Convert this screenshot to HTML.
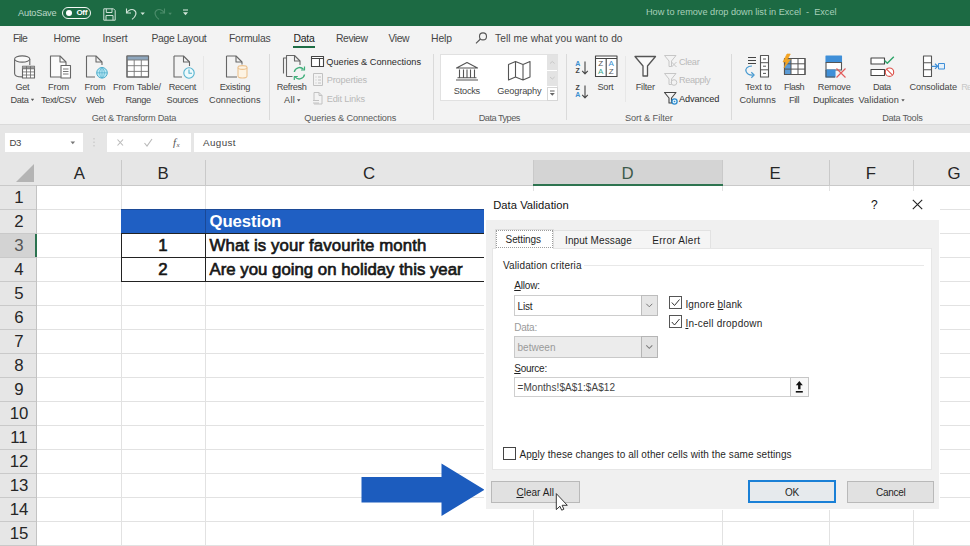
<!DOCTYPE html>
<html lang="en">
<head>
<meta charset="utf-8">
<title>How to remove drop down list in Excel - Excel</title>
<style>
*{box-sizing:border-box;margin:0;padding:0}
html,body{width:970px;height:546px;overflow:hidden;background:#fff}
body{font-family:"Liberation Sans",sans-serif;position:relative;color:#333}
.abs{position:absolute}
.t{position:absolute;white-space:nowrap;line-height:1}
#titlebar{left:0;top:0;width:970px;height:26px;background:#1c6a43}
#ribbon{left:0;top:26px;width:970px;height:98px;background:#f3f3f3}
#fbar{left:0;top:124px;width:970px;height:36px;background:#e6e6e6}
.gsep{position:absolute;top:28px;width:1px;height:66px;background:#dadada}
#grid{left:0;top:160px;width:970px;height:386px;background:#fff;overflow:hidden}
.ch{position:absolute;top:0;height:25px;background:#e6e6e6}
.rh{position:absolute;left:0;width:37px;height:24px;background:#e6e6e6;border-bottom:1px solid #c9c9c9}
.hl{position:absolute;left:37px;width:933px;height:1px;background:#e2e2e2}
.vl{position:absolute;top:25px;width:1px;height:361px;background:#e2e2e2}
#dlg{left:486px;top:187px;width:454px;height:323px}
#dlgtitle{left:-2px;top:4px;width:456px;height:318.500px;background:#fff}
#dlgbody{left:-.5px;top:33px;width:453.800px;height:288.500px;background:#f0f0f0}
.btn{position:absolute;height:22px;background:#e1e1e1;border:1px solid #b9b9b9}
.cb{position:absolute;width:13px;height:13px;border:1px solid #555;background:#fff}
.ico{position:absolute;overflow:visible}
</style>
</head>
<body>
<div id="titlebar" class="abs">
<div class="abs" style="left:62px;top:6.500px;width:29px;height:12.500px;border:1.100px solid #f4f9f6;border-radius:7px"></div>
<div class="abs" style="left:65.500px;top:9.700px;width:6px;height:6px;border-radius:50%;background:#fff"></div>
<svg class="ico" style="left:102.500px;top:7.500px" width="13" height="13" viewBox="0 0 13 13" fill="none" stroke="#cfe2d7" stroke-width="1"><path d="M.8.800h9.700l1.700 1.700v9.700H.8z"/><path d="M3.300.800v3.700h5.700V.8M3 12.200V7.500h7v4.700"/></svg>
<svg class="ico" style="left:124px;top:6px" width="24" height="15" viewBox="0 0 24 15" fill="none" stroke="#d4e6db" stroke-width="1.100"><path d="M2.500 2.500v4.500h4.500"/><path d="M2.800 6.800C4.500 3.800 8 2.700 10.300 4.200c2.800 1.800 2 6-2.300 9.200"/><path d="M16.500 6.500l2.200 2.500 2.200-2.500z" fill="#d4e6db" stroke="none"/></svg>
<svg class="ico" style="left:152px;top:6px" width="24" height="15" viewBox="0 0 24 15" fill="none" stroke="#4d8d6c" stroke-width="1.100"><path d="M12.500 2.500v4.500h-4.500"/><path d="M12.200 6.800C10.500 3.800 7 2.700 4.700 4.200c-2.800 1.800-2 6 2.300 9.200"/><path d="M16.300 6.800l1.800 2.100 1.800-2.100z" fill="#4d8d6c" stroke="none"/></svg>
<svg class="ico" style="left:181px;top:7px" width="9" height="11" viewBox="0 0 9 11"><path d="M2 3h5" stroke="#d4e6db" stroke-width="1.100"/><path d="M2 5.200l2.500 3 2.500-3z" fill="#d4e6db"/></svg>
</div>

<div id="ribbon" class="abs">
<div class="abs" style="left:293px;top:19.500px;width:22px;height:2px;background:#1e6d45"></div>
<div class="gsep" style="left:203px;top:30px;height:34px;background:#e7e7e7"></div>
<div class="gsep" style="left:269px"></div>
<div class="gsep" style="left:432.500px"></div>
<div class="gsep" style="left:566px"></div>
<div class="gsep" style="left:625px;top:30px;height:46px;background:#e7e7e7"></div>
<div class="gsep" style="left:731px"></div>
<div class="abs" style="left:440px;top:28px;width:118px;height:47px;background:#fff;border:1px solid #e1e1e1"></div>
<div class="abs" style="left:547px;top:29px;width:10.500px;height:15px;background:#e3e3e3"></div>
<div class="abs" style="left:547px;top:45px;width:10.500px;height:15px;background:#e3e3e3"></div>
<div class="abs" style="left:546.500px;top:60.500px;width:11.500px;height:14.500px;border:1px solid #d6d6d6;background:#fff"></div>
<svg class="ico" style="left:0;top:0" width="970" height="98" viewBox="0 26 970 98" fill="none" stroke="#666" stroke-width="1.100" stroke-linejoin="round">
<!-- search -->
<circle cx="483" cy="36.400" r="3.500" stroke="#555"/><path d="M480.400 39l-4.400 4.300" stroke="#555"/>
<!-- Get Data -->
<path d="M14.600 59v14.500c0 2 3.200 3.400 7.500 3.400M29.800 59v6"/><ellipse cx="22.200" cy="59" rx="7.600" ry="3.100" fill="#f9f9f9"/>
<rect x="22.500" y="66.200" width="12" height="11.800" fill="#fff"/><rect x="22.500" y="66.200" width="12" height="2.600" fill="#9a9a9a" stroke="none"/><path d="M22.500 68.800h12M22.500 71.900h12M22.500 75h12M26.500 66.200v11.800M30.500 66.200v11.800" stroke-width=".8"/>
<!-- From Text/CSV -->
<path d="M50.500 56h9.500l6 6v15h-15.500z" fill="#fbfbfb"/><path d="M60 56v6h6"/>
<rect x="61" y="65.500" width="9.500" height="12.500" fill="#fff"/><path d="M63 69h5.500M63 71.500h5.500M63 74h5.500" stroke-width=".9"/>
<!-- From Web -->
<path d="M86.500 56h9.500l6 6v3M95 77h-8.500v-21" fill="none"/><path d="M96 56v6h6"/>
<circle cx="102" cy="72.800" r="5.300" fill="#b9e8f4" stroke="#4aaccb" stroke-width="1"/><path d="M96.700 72.800h10.600M102 67.500v10.600M102 67.500c-3.200 3-3.200 7.600 0 10.600M102 67.500c3.200 3 3.200 7.600 0 10.600" stroke="#4aaccb" stroke-width=".7"/>
<!-- From Table/Range -->
<rect x="127" y="56" width="21.500" height="21" fill="#fff"/><rect x="127" y="56" width="21.500" height="4" fill="#8ea6bd" stroke="none"/><path d="M127 60h21.500M127 65.700h21.500M127 71.400h21.500M134.200 60v17M141.300 60v17" stroke-width=".9" stroke="#777"/><rect x="127" y="56" width="21.500" height="21"/>
<!-- Recent Sources -->
<path d="M174 56h9.500l6 6v4M182 77h-8V56"/><path d="M183.500 56v6h6"/>
<circle cx="189" cy="73" r="5.200" fill="#eefafc" stroke="#55b3cf"/><path d="M189 69.500v3.700h3" stroke="#55b3cf"/>
<!-- Existing Connections -->
<path d="M226.500 56h9.500l6 6v2.500M237 77h-10.500V56"/><path d="M236 56v6h6"/>
<path d="M238 67.500v8.500c0 1.200 2 2 4.500 2s4.500-.8 4.500-2v-8.500" fill="#fdf3e3" stroke="#ecc28f"/><ellipse cx="242.500" cy="67.500" rx="4.500" ry="1.900" fill="#fdf3e3" stroke="#ecc28f"/>
<!-- Refresh All -->
<path d="M283.500 73.500v-15.500h3M286.500 76.500h6M286.500 76.500v-21h8l5.500 5.500v4"/><path d="M294.500 55.500v5.500h5.500"/>
<path d="M294.300 72a5.300 5.300 0 0 1 9.200-2.600M304.500 74.500a5.300 5.300 0 0 1-9.200 2.600" stroke="#3fae7a" stroke-width="1.400"/><path d="M304.500 66.500v3.500h-3.500M294.300 80v-3.500h3.500" stroke="#3fae7a" stroke-width="1.200"/>
<!-- Queries & Connections -->
<rect x="311.500" y="56.500" width="12" height="10" fill="#fff" stroke="#444"/><path d="M311.500 58.500h12M319.500 58.500v8" stroke="#444"/>
<!-- Properties (disabled) -->
<g stroke="#c2c2c2" stroke-width="1"><rect x="313.500" y="73.500" width="9" height="12"/><path d="M315.500 77h1M318 77h3M315.500 80h1M318 80h3M315.500 83h1M318 83h3"/></g>
<!-- Edit Links (disabled) -->
<g stroke="#c2c2c2" stroke-width="1"><path d="M314 100v-7.500h5l3 3v8.500h-8"/><path d="M319 92.500v3h3M313 100.500h6M313 103h6"/></g>
<!-- Stocks -->
<g stroke="#555"><path d="M456.500 68l10.500-5.500 10.500 5.500zM456 80h22M457.500 77.800h19M459.500 69.500v8M463.500 69.500v8M467 69.500v8M470.500 69.500v8M474.500 69.500v8" stroke-width="1.100"/></g>
<!-- Geography -->
<path d="M508.500 64.500l7-3 7.500 3 7-3v15.500l-7 3-7.500-3-7 3zM515.500 61.500v15.500M523 64.500v15.500" stroke="#555"/>
<!-- gallery scroll arrows -->
<path d="M550 63.500l2.300-2 2.300 2M550 77l2.300 2 2.300-2" stroke="#c8c8c8" stroke-width="1"/><path d="M550 91h4.600" stroke="#666" stroke-width="1"/><path d="M549.800 93l2.500 2.800 2.500-2.800z" fill="#666" stroke="none"/>
<!-- sort arrows -->
<path d="M585 61.500v12M582.200 70.800l2.800 3 2.800-3M585 85.500v12M582.200 94.800l2.800 3 2.800-3" stroke="#444" stroke-width="1.100"/>
<!-- Sort big -->
<rect x="595.500" y="56" width="21.500" height="20.500" fill="#fff" stroke="#444"/><path d="M595.500 58.500h21.500M606.200 58.500v18" stroke="#444"/>
<!-- Filter -->
<path d="M635 56.500h20.500l-8 9.500v10h-4.500v-10z" fill="#fafafa" stroke="#555" stroke-width="1.300"/>
<!-- Clear (disabled) -->
<g stroke="#c6c6c6" stroke-width="1"><path d="M664.500 55.500h11.500l-4.500 5.500v5.500h-2.500v-5.500z"/><path d="M671.500 62l5 5M676.500 62l-5 5"/></g>
<!-- Reapply (disabled) -->
<g stroke="#c6c6c6" stroke-width="1"><path d="M664.500 73.500h11.500l-4.500 5.500v5.500h-2.500v-5.500z"/><circle cx="674" cy="82.500" r="2.800"/></g>
<!-- Advanced -->
<path d="M664.500 92.500h11.500l-4.500 5.500v5h-2.500v-5z" stroke="#444" stroke-width="1.100"/><circle cx="674.500" cy="101.500" r="2.600" fill="#e4f3fb" stroke="#2e8ccf" stroke-width="1.300"/><circle cx="674.500" cy="101.500" r=".8" fill="#2e8ccf" stroke="none"/>
<!-- Text to Columns -->
<path d="M748 57.500h8M748 60.500h8M748 63.500h8" stroke="#444" stroke-width="1"/><rect x="760.500" y="55.500" width="8" height="21.500" fill="#fff" stroke="#555"/><path d="M760.500 62.700h8M760.500 69.800h8M763 59h3M763 66.200h3M763 73.400h3" stroke="#555" stroke-width="1"/>
<path d="M752 66c-5 0-7 3-5.800 5.800 1 2.400 4 3.500 7.300 3.200" stroke="#4a9bd1" stroke-width="1.200"/><path d="M751.300 72.300l2.800 2.700-2.800 2.700" stroke="#4a9bd1" stroke-width="1.200"/>
<!-- Flash Fill -->
<rect x="784.500" y="58.500" width="20.500" height="16" fill="#fff" stroke="#555"/><rect x="784.500" y="58.500" width="6.500" height="16" fill="#5b9bd5" stroke="none"/><path d="M784.500 63.800h20.500M784.500 69.100h20.500M791 58.500v16M798 58.500v16" stroke="#555" stroke-width="1"/><rect x="784.500" y="58.500" width="20.500" height="16" stroke="#555"/>
<path d="M787 54l-4 8h3l-2 6 6.500-8.500h-3.200l3-5.500z" fill="#f5a623" stroke="#ec9a1c" stroke-width=".6"/>
<!-- Remove Duplicates -->
<rect x="826" y="56" width="15.500" height="6.500" fill="#3f8fd8" stroke="#3f8fd8"/><rect x="826" y="62.500" width="15.500" height="7.500" fill="#fff" stroke="#555"/><rect x="826" y="70" width="9" height="7" fill="#3f8fd8" stroke="#3f8fd8"/><path d="M826 70v7h9" stroke="#555"/>
<path d="M836.500 68.500l9 9M845.500 68.500l-9 9" stroke="#e25a5a" stroke-width="1.150"/>
<!-- Data Validation -->
<rect x="871" y="58" width="13.500" height="6" fill="#fff" stroke="#444"/><rect x="871" y="69.500" width="13.500" height="6" fill="#fff" stroke="#444"/>
<path d="M884.500 60.500l2.800 2.800 6.500-6.500" stroke="#2ea56a" stroke-width="1.400"/><circle cx="889.500" cy="72.200" r="4.200" fill="#fff" stroke="#dc4f48" stroke-width="1.100"/><path d="M886.500 69.200l6 6" stroke="#dc4f48" stroke-width="1.100"/>
<!-- Consolidate -->
<rect x="923.500" y="56" width="8" height="20.500" fill="#fff" stroke="#555"/><path d="M923.500 62.800h8M923.500 69.700h8" stroke="#555"/><path d="M931.500 66.300h5.500M935 63.700l2.700 2.600-2.700 2.600" stroke="#3f8fd8" stroke-width="1.200"/><rect x="938.500" y="63.500" width="6" height="5.500" fill="#e4f0fa" stroke="#3f8fd8" stroke-width="1"/>
<!-- dropdown arrows -->
<g fill="#555" stroke="none"><path d="M30.800 98.800l1.700 2.200 1.700-2.200zM297 99.300l1.700 2.200 1.700-2.200zM901.300 99.300l1.700 2.200 1.700-2.200z"/></g>
</svg>
</div>

<div id="fbar" class="abs">
<div class="abs" style="left:0;top:0;width:970px;height:1px;background:#dadada"></div>
<div class="abs" style="left:4.500px;top:9px;width:78px;height:18.500px;background:#fff"></div>
<div class="abs" style="left:106.500px;top:9px;width:84px;height:18.500px;background:#fff"></div>
<div class="abs" style="left:193.500px;top:9px;width:777px;height:18.500px;background:#fff"></div>
<svg class="ico" style="left:0;top:0" width="200" height="36" viewBox="0 124 200 36" fill="none" stroke="#b9b9b9" stroke-width="1.100">
<path d="M70.500 141.500l2.300 2.800 2.300-2.800z" fill="#777" stroke="none"/>
<path d="M94 138v1.500M94 141.500v1.500M94 145v1.500" stroke="#c4c4c4"/>
<path d="M117.500 139.500l5.500 6M123 139.500l-5.500 6"/>
<path d="M144.500 143l2.500 3 5-7"/>
</svg>
</div>

<div id="grid" class="abs">
<div class="hl" style="top:49px"></div>
<div class="hl" style="top:73px"></div>
<div class="hl" style="top:97px"></div>
<div class="hl" style="top:121px"></div>
<div class="hl" style="top:145px"></div>
<div class="hl" style="top:169px"></div>
<div class="hl" style="top:193px"></div>
<div class="hl" style="top:217px"></div>
<div class="hl" style="top:241px"></div>
<div class="hl" style="top:265px"></div>
<div class="hl" style="top:289px"></div>
<div class="hl" style="top:313px"></div>
<div class="hl" style="top:337px"></div>
<div class="hl" style="top:361px"></div>
<div class="hl" style="top:385px"></div>
<div class="vl" style="left:121px"></div>
<div class="vl" style="left:205px"></div>
<div class="vl" style="left:533px"></div>
<div class="vl" style="left:722px"></div>
<div class="vl" style="left:829px"></div>
<div class="vl" style="left:913px"></div>
<div class="ch" style="left:0;width:37px"></div>
<div class="abs" style="left:16px;top:4px;width:0;height:0;border-left:18px solid transparent;border-bottom:18px solid #b4b4b4"></div>
<div class="ch" style="left:37px;width:84px"></div>
<div class="ch" style="left:121px;width:84px;border-left:1px solid #c9c9c9"></div>
<div class="ch" style="left:205px;width:328px;border-left:1px solid #c9c9c9"></div>
<div class="ch" style="left:533px;width:189px;background:#d4d4d4;border-left:1px solid #c9c9c9"></div>
<div class="ch" style="left:722px;width:107px;border-left:1px solid #c9c9c9"></div>
<div class="ch" style="left:829px;width:84px;border-left:1px solid #c9c9c9"></div>
<div class="ch" style="left:913px;width:58px;border-left:1px solid #c9c9c9"></div>
<div class="abs" style="left:722px;top:0;width:1px;height:25px;background:#c9c9c9"></div>
<div class="abs" style="left:0;top:25px;width:970px;height:1px;background:#c9c9c9"></div>
<div class="abs" style="left:533px;top:24px;width:189.500px;height:2px;background:#2e7450"></div>
<div class="rh" style="top:26px"></div>
<div class="rh" style="top:50px"></div>
<div class="rh" style="top:74px;background:#d3d3d3"></div>
<div class="rh" style="top:98px"></div>
<div class="rh" style="top:122px"></div>
<div class="rh" style="top:146px"></div>
<div class="rh" style="top:170px"></div>
<div class="rh" style="top:194px"></div>
<div class="rh" style="top:218px"></div>
<div class="rh" style="top:242px"></div>
<div class="rh" style="top:266px"></div>
<div class="rh" style="top:290px"></div>
<div class="rh" style="top:314px"></div>
<div class="rh" style="top:338px"></div>
<div class="rh" style="top:362px"></div>
<div class="abs" style="left:36px;top:25px;width:1px;height:361px;background:#c3c3c3"></div>
<div class="abs" style="left:35px;top:74px;width:2px;height:23px;background:#2b7350"></div>
<div class="abs" style="left:121px;top:49px;width:412px;height:24px;background:#1f5fc3;border-top:1px solid #1c4a97"></div>
<div class="abs" style="left:204.500px;top:49px;width:1px;height:24px;background:#1a4896"></div>
<div class="abs" style="left:120.500px;top:72.500px;width:412.500px;height:49px;border:1px solid #222;border-right:none"></div>
<div class="abs" style="left:120.500px;top:96.500px;width:412.500px;height:1px;background:#222"></div>
<div class="abs" style="left:204.500px;top:72.500px;width:1px;height:49px;background:#222"></div>
<svg class="ico" style="left:360px;top:302px" width="130" height="60" viewBox="360 462 130 60"><path d="M361.500 477H441.500V463.500L484.500 489.750L441.500 516V502.500H361.500z" fill="#1c5cbe"/></svg>
</div>

<div id="dlg" class="abs">
<div id="dlgtitle" class="abs"></div>
<div id="dlgbody" class="abs"></div>
<svg class="ico" style="left:426px;top:12px" width="11" height="11" viewBox="0 0 11 11"><path d="M.8.800l9.400 9.400M10.200.800L.8 10.200" stroke="#222" stroke-width="1.100"/></svg>
<div class="abs" style="left:67px;top:42.500px;width:158px;height:19px;border:1px solid #e2e2e2;border-bottom:none;border-left:none;background:#f5f5f5"></div>
<div class="abs" style="left:6px;top:61px;width:440px;height:222px;background:#fff;border:1px solid #e6e6e6"></div>
<div class="abs" style="left:8.500px;top:42px;width:59px;height:20px;background:#fff;border:1px solid #dedede;border-bottom:none"></div>
<div class="abs" style="left:9.500px;top:43px;width:57px;height:17.500px;border:1px dotted #9c9c9c"></div>
<div class="abs" style="left:98px;top:77.500px;width:340px;height:1px;background:#e8e8e8"></div>
<div class="abs" style="left:27.500px;top:107.500px;width:144px;height:21.500px;background:#fff;border:1px solid #cdcdcd"></div>
<div class="abs" style="left:155px;top:107.500px;width:16.500px;height:21.500px;background:#e6e6e6;border:1px solid #bdbdbd"></div>
<div class="abs" style="left:27.500px;top:149px;width:144px;height:21.500px;background:#ececec;border:1px solid #c9c9c9"></div>
<div class="abs" style="left:155px;top:149px;width:16.500px;height:21.500px;background:#e2e2e2;border:1px solid #b5b5b5"></div>
<svg class="ico" style="left:155px;top:107px" width="17" height="64" viewBox="0 0 17 64" fill="none"><path d="M5.300 9.800l3 3 3-3" stroke="#777" stroke-width="1"/><path d="M5.300 51.300l3 3 3-3" stroke="#7d7d7d" stroke-width="1.100"/></svg>
<div class="cb" style="left:183px;top:109px"></div>
<div class="cb" style="left:183px;top:128.300px"></div>
<svg class="ico" style="left:183px;top:109px" width="13" height="33" viewBox="0 0 13 33" fill="none" stroke="#333" stroke-width="1"><path d="M2.800 6.500l2.700 3 5-6"/><path d="M2.800 26l2.700 3 5-6"/></svg>
<div class="abs" style="left:27.500px;top:190px;width:277px;height:20px;background:#fff;border:1px solid #cfcfcf"></div>
<div class="abs" style="left:304px;top:190px;width:18.500px;height:20px;background:#f8f8f8;border:1px solid #c6c6c6"></div>
<svg class="ico" style="left:304px;top:190px" width="19" height="20" viewBox="0 0 19 20"><path d="M9.300 4l-3.500 4.300h2.300v4h2.400v-4h2.300z" fill="#111"/><path d="M5.800 14.800h7" stroke="#111" stroke-width="1.600"/></svg>
<div class="cb" style="left:16.500px;top:259.500px;border-color:#444"></div>
<div class="btn" style="left:5px;top:293.500px;width:88.500px"></div>
<div class="btn" style="left:262px;top:293px;width:87.500px;height:22.500px;border:2px solid #1a80d6;background:#e6eaed"></div>
<div class="btn" style="left:361px;top:293.500px;width:87px"></div>
</div>

<div id="texts">
<span class="t" style="left:18px;top:9px;font-size:9.2px;color:#bcd9c9;letter-spacing:-0.17px;">AutoSave</span>
<span class="t" style="left:76.5px;top:9px;font-size:8px;color:#fff;letter-spacing:-0.35px;font-weight:bold;">Off</span>
<span class="t" style="left:646px;top:8px;font-size:9.2px;color:#a8d0ba;letter-spacing:-0.02px;">How to remove drop down list in Excel &nbsp;-&nbsp; Excel</span>
<span class="t" style="left:13px;top:34px;font-size:10.4px;color:#464646;letter-spacing:-0.69px;">File</span>
<span class="t" style="left:53.5px;top:34px;font-size:10.4px;color:#464646;letter-spacing:-0.30px;">Home</span>
<span class="t" style="left:102.5px;top:34px;font-size:10.4px;color:#464646;letter-spacing:-0.17px;">Insert</span>
<span class="t" style="left:151.5px;top:34px;font-size:10.4px;color:#464646;letter-spacing:-0.31px;">Page Layout</span>
<span class="t" style="left:229px;top:34px;font-size:10.4px;color:#464646;letter-spacing:-0.23px;">Formulas</span>
<span class="t" style="left:293.5px;top:34px;font-size:10.4px;color:#222;letter-spacing:-0.24px;">Data</span>
<span class="t" style="left:336px;top:34px;font-size:10.4px;color:#464646;letter-spacing:-0.43px;">Review</span>
<span class="t" style="left:388.5px;top:34px;font-size:10.4px;color:#464646;letter-spacing:-0.46px;">View</span>
<span class="t" style="left:431px;top:34px;font-size:10.4px;color:#464646;letter-spacing:-0.09px;">Help</span>
<span class="t" style="left:495px;top:34px;font-size:10.2px;color:#464646;letter-spacing:0.07px;">Tell me what you want to do</span>
<span class="t" style="left:15.5px;top:83px;font-size:9.2px;color:#464646;letter-spacing:-0.44px;">Get</span>
<span class="t" style="left:10.4px;top:96px;font-size:9.2px;color:#464646;letter-spacing:-0.33px;">Data</span>
<span class="t" style="left:48px;top:83px;font-size:9.2px;color:#464646;letter-spacing:-0.06px;">From</span>
<span class="t" style="left:41px;top:96px;font-size:9.2px;color:#464646;letter-spacing:-0.41px;">Text/CSV</span>
<span class="t" style="left:84.6px;top:83px;font-size:9.2px;color:#464646;letter-spacing:-0.16px;">From</span>
<span class="t" style="left:86.3px;top:96px;font-size:9.2px;color:#464646;letter-spacing:-0.34px;">Web</span>
<span class="t" style="left:113px;top:83px;font-size:9.2px;color:#464646;letter-spacing:-0.03px;">From Table/</span>
<span class="t" style="left:125.6px;top:96px;font-size:9.2px;color:#464646;letter-spacing:-0.38px;">Range</span>
<span class="t" style="left:168.7px;top:83px;font-size:9.2px;color:#464646;letter-spacing:-0.30px;">Recent</span>
<span class="t" style="left:166.6px;top:96px;font-size:9.2px;color:#464646;letter-spacing:-0.33px;">Sources</span>
<span class="t" style="left:219.7px;top:83px;font-size:9.2px;color:#464646;letter-spacing:-0.20px;">Existing</span>
<span class="t" style="left:209px;top:96px;font-size:9.2px;color:#464646;letter-spacing:0.04px;">Connections</span>
<span class="t" style="left:91.7px;top:114px;font-size:9.2px;color:#5a5a5a;letter-spacing:-0.25px;">Get &amp; Transform Data</span>
<span class="t" style="left:276.7px;top:83px;font-size:9.2px;color:#464646;letter-spacing:-0.34px;">Refresh</span>
<span class="t" style="left:284px;top:96px;font-size:9.2px;color:#464646;letter-spacing:0.26px;">All</span>
<span class="t" style="left:326.3px;top:58px;font-size:9.2px;color:#2b2b2b;letter-spacing:0.01px;">Queries &amp; Connections</span>
<span class="t" style="left:326.7px;top:76px;font-size:9.2px;color:#b9b9b9;letter-spacing:-0.16px;">Properties</span>
<span class="t" style="left:326.7px;top:95px;font-size:9.2px;color:#b9b9b9;letter-spacing:-0.17px;">Edit Links</span>
<span class="t" style="left:304.3px;top:114px;font-size:9.2px;color:#5a5a5a;letter-spacing:-0.12px;">Queries &amp; Connections</span>
<span class="t" style="left:453.8px;top:87px;font-size:9.2px;color:#464646;letter-spacing:-0.23px;">Stocks</span>
<span class="t" style="left:497.3px;top:87px;font-size:9.2px;color:#464646;letter-spacing:-0.14px;">Geography</span>
<span class="t" style="left:478.7px;top:114px;font-size:9.2px;color:#5a5a5a;letter-spacing:-0.52px;">Data Types</span>
<span class="t" style="left:597.5px;top:83px;font-size:9.2px;color:#464646;letter-spacing:-0.26px;">Sort</span>
<span class="t" style="left:635.7px;top:83px;font-size:9.2px;color:#464646;letter-spacing:-0.22px;">Filter</span>
<span class="t" style="left:679px;top:58px;font-size:9.2px;color:#b9b9b9;letter-spacing:-0.31px;">Clear</span>
<span class="t" style="left:679px;top:76px;font-size:9.2px;color:#b9b9b9;letter-spacing:-0.36px;">Reapply</span>
<span class="t" style="left:679px;top:95px;font-size:9.2px;color:#2b2b2b;letter-spacing:-0.08px;">Advanced</span>
<span class="t" style="left:624.9px;top:114px;font-size:9.2px;color:#5a5a5a;letter-spacing:-0.05px;">Sort &amp; Filter</span>
<span class="t" style="left:745.3px;top:83px;font-size:9.2px;color:#464646;letter-spacing:-0.11px;">Text to</span>
<span class="t" style="left:739.4px;top:96px;font-size:9.2px;color:#464646;letter-spacing:0.02px;">Columns</span>
<span class="t" style="left:784px;top:83px;font-size:9.2px;color:#464646;letter-spacing:-0.45px;">Flash</span>
<span class="t" style="left:788.9px;top:96px;font-size:9.2px;color:#464646;letter-spacing:-0.34px;">Fill</span>
<span class="t" style="left:817.8px;top:83px;font-size:9.2px;color:#464646;letter-spacing:-0.25px;">Remove</span>
<span class="t" style="left:812.9px;top:96px;font-size:9.2px;color:#464646;letter-spacing:-0.21px;">Duplicates</span>
<span class="t" style="left:873px;top:83px;font-size:9.2px;color:#464646;letter-spacing:-0.41px;">Data</span>
<span class="t" style="left:858.6px;top:96px;font-size:9.2px;color:#464646;letter-spacing:0.07px;">Validation</span>
<span class="t" style="left:909.4px;top:83px;font-size:9.2px;color:#464646;letter-spacing:-0.08px;">Consolidate</span>
<span class="t" style="left:961.3px;top:83px;font-size:9.2px;color:#c8c8c8;letter-spacing:-0.90px;">Re</span>
<span class="t" style="left:882.2px;top:114px;font-size:9.2px;color:#5a5a5a;letter-spacing:-0.30px;">Data Tools</span>
<span class="t" style="left:575.2px;top:60px;font-size:7px;color:#3a8fd0;letter-spacing:-0.06px;font-weight:bold;">A</span>
<span class="t" style="left:575.4px;top:67px;font-size:7px;color:#444;letter-spacing:0.32px;font-weight:bold;">Z</span>
<span class="t" style="left:575.4px;top:84px;font-size:7px;color:#444;letter-spacing:0.32px;font-weight:bold;">Z</span>
<span class="t" style="left:575.2px;top:91px;font-size:7px;color:#3a8fd0;letter-spacing:-0.06px;font-weight:bold;">A</span>
<span class="t" style="left:598.2px;top:60px;font-size:8px;color:#555;letter-spacing:0.11px;">Z</span>
<span class="t" style="left:598px;top:68px;font-size:8px;color:#3aa68f;letter-spacing:0.06px;">A</span>
<span class="t" style="left:608.6px;top:60px;font-size:8px;color:#3a8fd0;letter-spacing:0.06px;">A</span>
<span class="t" style="left:608.8px;top:68px;font-size:8px;color:#555;letter-spacing:0.11px;">Z</span>
<span class="t" style="left:9.4px;top:138px;font-size:9.6px;color:#444;letter-spacing:-0.33px;">D3</span>
<span class="t" style="left:173px;top:137px;font-size:11px;color:#555;letter-spacing:-0.06px;font-family:'Liberation Serif',serif;font-style:italic;">f</span>
<span class="t" style="left:176.5px;top:142px;font-size:7px;color:#555;letter-spacing:0.39px;font-family:'Liberation Serif',serif;font-style:italic;">x</span>
<span class="t" style="left:203px;top:138px;font-size:9.8px;color:#444;letter-spacing:0.41px;">August</span>
<span class="t" style="left:73.4px;top:166px;font-size:16.8px;color:#262626;width:12px;text-align:center;">A</span>
<span class="t" style="left:157px;top:166px;font-size:16.8px;color:#262626;width:12px;text-align:center;">B</span>
<span class="t" style="left:363px;top:166px;font-size:16.8px;color:#262626;width:12px;text-align:center;">C</span>
<span class="t" style="left:621.5px;top:166px;font-size:16.8px;color:#3d5a4b;width:12px;text-align:center;">D</span>
<span class="t" style="left:769px;top:166px;font-size:16.8px;color:#262626;width:12px;text-align:center;">E</span>
<span class="t" style="left:865px;top:166px;font-size:16.8px;color:#262626;width:12px;text-align:center;">F</span>
<span class="t" style="left:947.5px;top:166px;font-size:16.8px;color:#262626;width:12px;text-align:center;">G</span>
<span class="t" style="left:7px;top:190px;font-size:16.8px;color:#262626;width:24px;text-align:center;">1</span>
<span class="t" style="left:7px;top:214px;font-size:16.8px;color:#262626;width:24px;text-align:center;">2</span>
<span class="t" style="left:7px;top:238px;font-size:16.8px;color:#555;width:24px;text-align:center;">3</span>
<span class="t" style="left:7px;top:262px;font-size:16.8px;color:#262626;width:24px;text-align:center;">4</span>
<span class="t" style="left:7px;top:286px;font-size:16.8px;color:#262626;width:24px;text-align:center;">5</span>
<span class="t" style="left:7px;top:310px;font-size:16.8px;color:#262626;width:24px;text-align:center;">6</span>
<span class="t" style="left:7px;top:334px;font-size:16.8px;color:#262626;width:24px;text-align:center;">7</span>
<span class="t" style="left:7px;top:358px;font-size:16.8px;color:#262626;width:24px;text-align:center;">8</span>
<span class="t" style="left:7px;top:382px;font-size:16.8px;color:#262626;width:24px;text-align:center;">9</span>
<span class="t" style="left:7px;top:406px;font-size:16.8px;color:#262626;width:24px;text-align:center;">10</span>
<span class="t" style="left:7px;top:430px;font-size:16.8px;color:#262626;width:24px;text-align:center;">11</span>
<span class="t" style="left:7px;top:454px;font-size:16.8px;color:#262626;width:24px;text-align:center;">12</span>
<span class="t" style="left:7px;top:478px;font-size:16.8px;color:#262626;width:24px;text-align:center;">13</span>
<span class="t" style="left:7px;top:502px;font-size:16.8px;color:#262626;width:24px;text-align:center;">14</span>
<span class="t" style="left:7px;top:526px;font-size:16.8px;color:#262626;width:24px;text-align:center;">15</span>
<span class="t" style="left:209.5px;top:214px;font-size:16.8px;color:#fff;letter-spacing:-0.13px;font-weight:bold;">Question</span>
<span class="t" style="left:209.5px;top:238px;font-size:16.8px;color:#161616;letter-spacing:0.12px;-webkit-text-stroke:.65px #161616;">What is your favourite month</span>
<span class="t" style="left:209.5px;top:262px;font-size:16.8px;color:#161616;letter-spacing:0.01px;-webkit-text-stroke:.65px #161616;">Are you going on holiday this year</span>
<span class="t" style="left:158px;top:238px;font-size:16.8px;color:#161616;-webkit-text-stroke:.65px #161616;width:10px;text-align:center;">1</span>
<span class="t" style="left:158px;top:262px;font-size:16.8px;color:#161616;-webkit-text-stroke:.65px #161616;width:10px;text-align:center;">2</span>
<span class="t" style="left:493.2px;top:200px;font-size:11.2px;color:#111;letter-spacing:0.04px;">Data Validation</span>
<span class="t" style="left:871px;top:199px;font-size:12px;color:#111;letter-spacing:-0.90px;">?</span>
<span class="t" style="left:505.6px;top:235px;font-size:10px;color:#1f1f1f;letter-spacing:-0.11px;">Settings</span>
<span class="t" style="left:565px;top:236px;font-size:10px;color:#1f1f1f;letter-spacing:0.10px;">Input Message</span>
<span class="t" style="left:652.3px;top:236px;font-size:10px;color:#1f1f1f;letter-spacing:0.27px;">Error Alert</span>
<span class="t" style="left:502.9px;top:261px;font-size:10px;color:#1f1f1f;letter-spacing:0.15px;">Validation criteria</span>
<span class="t" style="left:514.2px;top:281px;font-size:10px;color:#1f1f1f;letter-spacing:-0.15px;"><u>A</u>llow:</span>
<span class="t" style="left:517.5px;top:302px;font-size:10px;color:#1f1f1f;letter-spacing:-0.14px;">List</span>
<span class="t" style="left:514.2px;top:323px;font-size:10px;color:#9a9a9a;letter-spacing:-0.22px;">Data:</span>
<span class="t" style="left:517.5px;top:343px;font-size:10px;color:#9a9a9a;letter-spacing:0.03px;">between</span>
<span class="t" style="left:514.2px;top:364px;font-size:10px;color:#1f1f1f;letter-spacing:-0.24px;"><u>S</u>ource:</span>
<span class="t" style="left:517.5px;top:383px;font-size:10px;color:#444;letter-spacing:0.06px;">=Months!$A$1:$A$12</span>
<span class="t" style="left:685.4px;top:300px;font-size:10px;color:#1f1f1f;letter-spacing:0.15px;">Ignore <u>b</u>lank</span>
<span class="t" style="left:685.4px;top:319px;font-size:10px;color:#1f1f1f;letter-spacing:0.23px;"><u>I</u>n-cell dropdown</span>
<span class="t" style="left:519.4px;top:450px;font-size:10px;color:#1f1f1f;letter-spacing:0.09px;">Ap<u>p</u>ly these changes to all other cells with the same settings</span>
<span class="t" style="left:516.4px;top:488px;font-size:10px;color:#1f1f1f;letter-spacing:0.04px;"><u>C</u>lear All</span>
<span class="t" style="left:785px;top:488px;font-size:10px;color:#1f1f1f;letter-spacing:-0.33px;">OK</span>
<span class="t" style="left:876px;top:488px;font-size:10px;color:#1f1f1f;letter-spacing:-0.26px;">Cancel</span>
</div>
<svg class="ico" style="left:555px;top:492px" width="14" height="20" viewBox="0 0 14 20"><path d="M1.300 1.600v16l3.600-3.400 1.800 4 2.200-1-1.800-3.900h5.200z" fill="#fff" stroke="#222" stroke-width=".9" stroke-linejoin="round"/></svg>

</body>
</html>
